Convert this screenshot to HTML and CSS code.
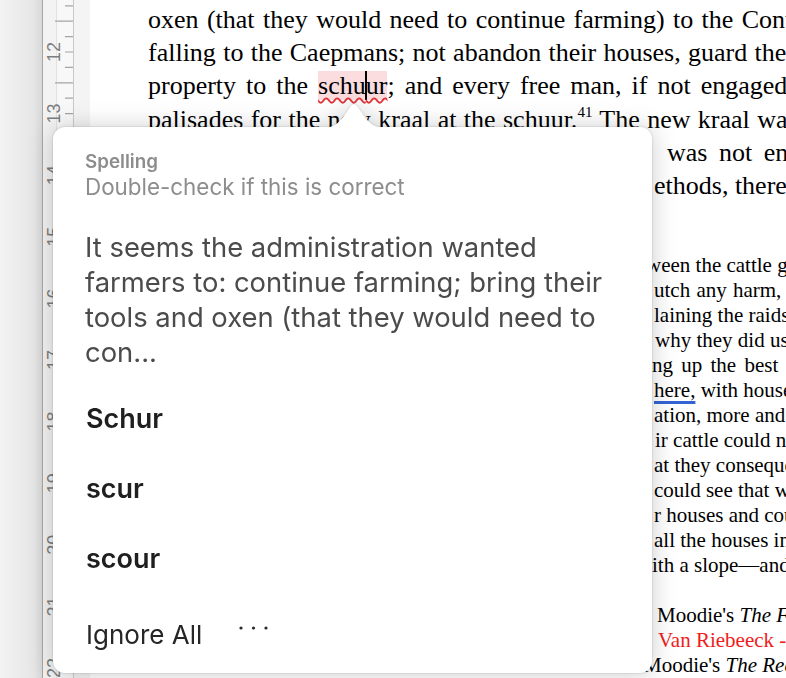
FILE: index.html
```html
<!DOCTYPE html>
<html lang="en">
<head>
<meta charset="utf-8">
<title>Spelling</title>
<link rel="stylesheet" href="styles.css">
</head>
<body>
<div class="app">
  <div class="gutter"></div>
  <div class="ruler">
    <svg width="30" height="678" viewBox="0 0 30 678">
      <path class="ticks" d="M22 5.8h8M12 21.2h18M22 36.6h8M22 52h8M22 67.4h8M12 82.8h18M22 98.2h8M22 113.6h8M22 129h8M12 144.4h18M22 159.8h8M22 175.2h8M22 190.6h8M12 206h18M22 221.4h8M22 236.8h8M22 252.2h8M12 267.6h18M22 283h8M22 298.4h8M22 313.8h8M12 329.2h18M22 344.6h8M22 360h8M22 375.4h8M12 390.8h18M22 406.2h8M22 421.6h8M22 437h8M12 452.4h18M22 467.8h8M22 483.2h8M22 498.6h8M12 514h18M22 529.4h8M22 544.8h8M22 560.2h8M12 575.6h18M22 591h8M22 606.4h8M22 621.8h8M12 637.2h18M22 652.6h8M22 668h8"/>
      <g class="nums">
        <text transform="translate(17 52) rotate(-90)">12</text>
        <text transform="translate(17 113.6) rotate(-90)">13</text>
        <text transform="translate(17 175.2) rotate(-90)">14</text>
        <text transform="translate(17 236.8) rotate(-90)">15</text>
        <text transform="translate(17 298.4) rotate(-90)">16</text>
        <text transform="translate(17 360) rotate(-90)">17</text>
        <text transform="translate(17 421.6) rotate(-90)">18</text>
        <text transform="translate(17 483.2) rotate(-90)">19</text>
        <text transform="translate(17 544.8) rotate(-90)">20</text>
        <text transform="translate(17 606.4) rotate(-90)">21</text>
        <text transform="translate(17 668) rotate(-90)">22</text>
      </g>
    </svg>
  </div>
  <div class="strip"></div>
  <main class="page">
    <div class="para">
      <div class="ln ws-a">oxen (that they would need to continue farming) to the Contract</div>
      <div class="ln ws-b">falling to the Caepmans; not abandon their houses, guard the</div>
      <div class="ln ws-c">property to the <span class="err">schu<span class="caret"></span>ur</span>; and every free man, if not engaged</div>
      <div class="ln ws-d">palisades for the new kraal at the schuur.<sup>41</sup> The new kraal was</div>
      <div class="ln frag-was">was not enough</div>
      <div class="ln frag">ethods, therefore</div>
    </div>
    <div class="notes">
      <div class="sl frag-w">ween the cattle guard</div>
      <div class="sl frag ws-s">utch any harm, to</div>
      <div class="sl frag">laining the raids</div>
      <div class="sl frag-r">why they did use</div>
      <div class="sl frag-l ws-w">ng up the best land</div>
      <div class="sl frag"><span class="gram">here,</span> with houses</div>
      <div class="sl frag">ation, more and</div>
      <div class="sl frag-r">ir cattle could not</div>
      <div class="sl frag">at they consequently</div>
      <div class="sl frag">could see that we</div>
      <div class="sl frag">r houses and could</div>
      <div class="sl frag">all the houses in</div>
      <div class="sl frag-l">ith a slope—and</div>
      <div class="sl frag-m gap">Moodie's <i>The Founding</i></div>
      <div class="sl frag-v red">Van Riebeeck - Journal</div>
      <div class="sl frag-e">Moodie's <i>The Record</i></div>
    </div>
  </main>
</div>

<div class="popover">
  <svg class="beak" width="64" height="27" viewBox="0 0 64 27">
    <path d="M0 27 C11 27 16 23 22 15 L28.5 5.5 Q32 0.5 35.5 5.5 L42 15 C48 23 53 27 64 27 Z"/>
  </svg>
  <div class="card">
    <div class="kicker">Spelling</div>
    <div class="hint">Double-check if this is correct</div>
    <p class="ctx">It seems the administration wanted<br>farmers to: continue farming; bring their<br>tools and oxen (that they would need to<br>con...</p>
    <ul class="sugg">
      <li>Schur</li>
      <li>scur</li>
      <li>scour</li>
    </ul>
    <div class="foot">
      <span class="ignore">Ignore All</span>
      <svg class="more" width="32" height="70" viewBox="0 0 32 70">
        <circle cx="3" cy="28" r="1.6"/>
        <circle cx="15.5" cy="28" r="1.6"/>
        <circle cx="28" cy="28" r="1.6"/>
      </svg>
    </div>
  </div>
</div>
</body>
</html>
```

FILE: styles.css
```css
html, body {
  margin: 0;
  padding: 0;
}
body {
  width: 786px;
  height: 678px;
  overflow: hidden;
  position: relative;
  background: #ffffff;
  font-family: "Liberation Serif", "Times New Roman", serif;
}
.app {
  display: flex;
  height: 678px;
}
.gutter {
  flex: none;
  width: 42px;
  background: linear-gradient(to right, #f3f3f3 0%, #e6e6e6 80%, #d8d8d8 100%);
  border-right: 1px solid #a6a6a6;
}
.ruler {
  flex: none;
  width: 30px;
  background: linear-gradient(to right, #f3f3f3 0, #f3f3f3 13px, #e2e2e2 13px, #e2e2e2 14px, #f8f8f8 14px);
  border-right: 1px solid #c9c9c9;
}
.ruler svg {
  display: block;
}
.ticks {
  stroke: #a4a4a4;
  stroke-width: 1.2;
  fill: none;
}
.nums text {
  font-family: "Liberation Sans", Arial, sans-serif;
  font-size: 18px;
  fill: #7d7d7d;
  text-anchor: middle;
}
.strip {
  flex: none;
  width: 16px;
  background: #f4f4f4;
}
.page {
  flex: 1;
  min-width: 0;
  overflow: hidden;
  padding: 2.6px 0 0 58px;
  color: #000;
}
.ln {
  font-size: 26px;
  line-height: 33.33px;
  white-space: nowrap;
}
.ws-a { word-spacing: 1.9px; }
.ws-b { word-spacing: 0.8px; }
.ws-c { word-spacing: 3.5px; }
.ws-d { word-spacing: 0.9px; }
sup {
  font-size: 15px;
  line-height: 0;
  vertical-align: 11px;
}
.err {
  background: #fbdde0;
  text-decoration: underline wavy #e2383c;
  text-decoration-thickness: 2px;
  text-underline-offset: 3px;
}
.caret {
  display: inline-block;
  width: 2px;
  height: 29px;
  margin: 0 -1px;
  background: #000;
  vertical-align: -6px;
}
.frag { padding-left: 506px; }
.frag-was { padding-left: 519px; word-spacing: 5px; }
.frag-w { padding-left: 498px; }
.frag-r { padding-left: 507px; }
.frag-l { padding-left: 504px; }
.frag-m { padding-left: 509px; }
.frag-v { padding-left: 510px; }
.frag-e { padding-left: 495px; }
.notes {
  margin-top: 50.8px;
}
.sl {
  font-size: 21px;
  line-height: 25px;
  white-space: nowrap;
}
.ws-s { word-spacing: 1px; }
.ws-w { word-spacing: 3px; }
.gap { margin-top: 25px; }
.red { color: #f01c1c; }
.gram {
  text-decoration: underline solid #3464d2;
  text-decoration-thickness: 2.5px;
  text-underline-offset: 4px;
}

/* popover */
.popover {
  position: absolute;
  left: 53px;
  top: 101px;
  width: 599px;
  display: flex;
  flex-direction: column;
  filter: drop-shadow(0 0 1px rgba(0, 0, 0, 0.2)) drop-shadow(0 1px 12px rgba(0, 0, 0, 0.2));
}
.beak {
  display: block;
  margin-left: 269px;
  margin-bottom: -1px;
  fill: #ffffff;
}
.card {
  height: 546px;
  box-sizing: border-box;
  background: #ffffff;
  border-radius: 12px;
  padding: 23.2px 32px 0 32px;
  font-family: Inter, "Noto Sans", sans-serif;
}
.kicker {
  font-size: 18.8px;
  line-height: 24px;
  font-weight: 600;
  color: #8d8d8d;
}
.hint {
  font-size: 22.4px;
  line-height: 25px;
  color: #8d8d8d;
}
.ctx {
  margin: 30.6px 0 0 0;
  font-size: 27.4px;
  line-height: 35px;
  color: #4b4b4b;
}
.sugg {
  list-style: none;
  margin: 14.4px 0 0 1px;
  padding: 0;
}
.sugg li {
  font-size: 27px;
  line-height: 70px;
  font-weight: 600;
  color: #1f1f1f;
}
.foot {
  margin: 6.3px 0 0 1px;
  height: 70px;
  display: flex;
  align-items: center;
  gap: 36px;
}
.ignore {
  font-size: 26px;
  line-height: 70px;
  color: #262626;
}
.more {
  display: block;
  fill: #2a2a2a;
}
```
